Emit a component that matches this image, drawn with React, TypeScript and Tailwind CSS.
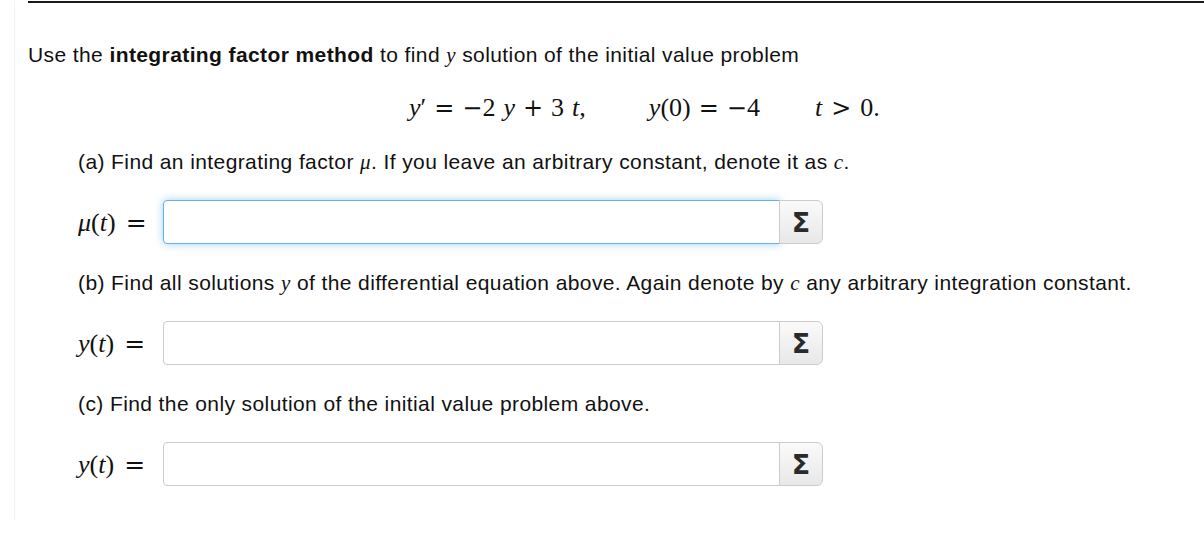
import React from 'react';

const sans = { fontFamily: '"Liberation Sans", Arial, sans-serif' };

function M({ children }: { children: React.ReactNode }) {
  return <span className="font-['Liberation_Serif',serif] italic">{children}</span>;
}

function R({ children }: { children: React.ReactNode }) {
  return <span className="font-['Liberation_Serif',serif] not-italic">{children}</span>;
}

// relation with thick spaces on both sides
function Rel({ children }: { children: React.ReactNode }) {
  return <span className="mx-[8px] not-italic font-['DejaVu_Serif',serif] text-[24px]">{children}</span>;
}

function Bin({ children }: { children: React.ReactNode }) {
  return <span className="mx-[8px] not-italic font-['DejaVu_Serif',serif] text-[24px]">{children}</span>;
}

function Op({ children }: { children: React.ReactNode }) {
  return <span className="not-italic font-['DejaVu_Serif',serif] text-[24px]">{children}</span>;
}

function LabelEq() {
  return <span className="ml-[10px] not-italic font-['DejaVu_Serif',serif] text-[25px]">=</span>;
}

function AnswerRow({ label, focused }: { label: React.ReactNode; focused?: boolean }) {
  return (
    <div className="flex items-center h-[44px]">
      <div className="w-[85px] text-[26px] text-[#111] font-['Liberation_Serif',serif] whitespace-nowrap">{label}</div>
      <div
        className={
          focused
            ? 'w-[617px] h-[44px] bg-white rounded-l-[4px] border border-[#66afe9] shadow-[0_0_8px_rgba(102,175,233,0.6)]'
            : 'w-[617px] h-[44px] bg-white rounded-l-[4px] border border-[#cccccc]'
        }
      />
      <button className="w-[44px] h-[44px] -ml-px flex items-center justify-center rounded-r-[6px] border border-[#cccccc] bg-gradient-to-b from-[#fafafa] to-[#e8e8e8] text-[#2a2a2a] text-[27px] leading-none font-bold font-['DejaVu_Sans',sans-serif]">
        Σ
      </button>
    </div>
  );
}

export default function App() {
  return (
    <div className="w-[1204px] h-[543px] bg-white text-[#111]" style={sans}>
      <div className="ml-[14px] h-[520px] border-l border-[#f3f3f3] pl-[13px]">
        <div className="mt-px h-[2px] bg-[#1a1a1a]" />
        <p className="mt-[38px] text-[21px] leading-[28px] tracking-[0.4px]">
          Use the <b>integrating factor method</b> to find <M>y</M> solution of the initial value problem
        </p>
        <div className="mt-[23px] h-[32px] flex items-center text-[26px] leading-[32px] whitespace-nowrap pl-[381px] font-['Liberation_Serif',serif]">
          <span>
            <M>y</M>′<Rel>=</Rel><Op>−</Op>2<span className="ml-[8px]"><M>y</M></span><Bin>+</Bin>3<span className="ml-[8px]"><M>t</M></span>,
          </span>
          <span className="ml-[63px]">
            <M>y</M>(0)<Rel>=</Rel><Op>−</Op>4
          </span>
          <span className="ml-[55px]">
            <M>t</M><span className="mx-[9px] not-italic font-['DejaVu_Serif',serif] text-[24px]">&gt;</span>0.
          </span>
        </div>
        <div className="pl-[50px]">
          <p className="mt-[24px] text-[21px] leading-[28px] tracking-[0.4px]">
            (a) Find an integrating factor <M>μ</M>. If you leave an arbitrary constant, denote it as <M>c</M>.
          </p>
          <div className="mt-[24px]">
            <AnswerRow focused label={<><M>μ</M><R>(</R><M>t</M><R>)</R><LabelEq /></>} />
          </div>
          <p className="mt-[25px] text-[21px] leading-[28px] tracking-[0.4px]">
            (b) Find all solutions <M>y</M> of the differential equation above. Again denote by <M>c</M> any arbitrary integration constant.
          </p>
          <div className="mt-[24px]">
            <AnswerRow label={<><M>y</M><R>(</R><M>t</M><R>)</R><LabelEq /></>} />
          </div>
          <p className="mt-[25px] text-[21px] leading-[28px] tracking-[0.4px]">(c) Find the only solution of the initial value problem above.</p>
          <div className="mt-[24px]">
            <AnswerRow label={<><M>y</M><R>(</R><M>t</M><R>)</R><LabelEq /></>} />
          </div>
        </div>
      </div>
    </div>
  );
}
